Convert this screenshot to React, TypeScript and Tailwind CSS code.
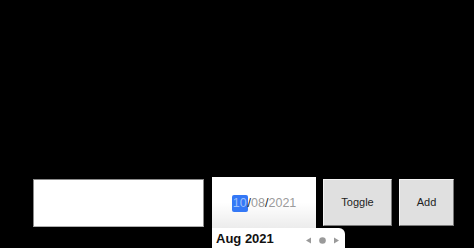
import React from "react";

export default function App() {
  return (
    <div
      className="relative w-[474px] h-[248px] bg-black overflow-hidden"
      style={{ fontFamily: '"Liberation Sans", Arial, sans-serif' }}
    >
      <div className="flex items-start pt-[177px] pl-[33px]">
        <div className="mt-[2px] w-[171px] h-[48px] bg-white border border-[#8a8a8a] border-b-[#b0b0b0]" />
        <div className="ml-[8px] w-[104px] h-[51px] bg-gradient-to-b from-white via-white to-[#ececec] flex items-center justify-center text-[12.5px] leading-none pt-[2px]">
          <span className="bg-[#3478f6] text-[#9ec0fa] rounded-[2px] px-[1px] py-[2px]">10</span>
          <span className="text-[#1a1a1a]">/</span>
          <span className="text-[#9b9b9b]">08</span>
          <span className="text-[#1a1a1a]">/</span>
          <span className="text-[#9b9b9b]">2021</span>
        </div>
        <button className="ml-[7px] mt-[2px] w-[69px] h-[47px] bg-[#e0e0e0] border border-t-[#f4f4f4] border-l-[#f4f4f4] border-r-[#7a7a7a] border-b-[#7a7a7a] text-[11px] text-[#1e1e1e] flex items-center justify-center">
          Toggle
        </button>
        <button className="ml-[7px] mt-[2px] w-[55px] h-[47px] bg-[#e0e0e0] border border-t-[#f4f4f4] border-l-[#f4f4f4] border-r-[#7a7a7a] border-b-[#7a7a7a] text-[11px] text-[#1e1e1e] flex items-center justify-center">
          Add
        </button>
      </div>
      <div className="absolute left-[212px] top-[228px] w-[133px] h-[30px] bg-white rounded-tr-[6px] flex items-start justify-between pl-[4px] pr-[5px] pt-[4px]">
        <span className="text-[13px] font-bold text-[#111] leading-[14px]">Aug 2021</span>
        <div className="flex items-center gap-[7px] mt-[5px]">
          <svg width="7" height="7" viewBox="0 0 7 7"><polygon points="6,0.5 6,6.5 1,3.5" fill="#9a9a9a" /></svg>
          <svg width="7" height="7" viewBox="0 0 7 7"><circle cx="3.5" cy="3.5" r="3.3" fill="#9a9a9a" /></svg>
          <svg width="7" height="7" viewBox="0 0 7 7"><polygon points="1,0.5 1,6.5 6,3.5" fill="#9a9a9a" /></svg>
        </div>
      </div>
    </div>
  );
}
